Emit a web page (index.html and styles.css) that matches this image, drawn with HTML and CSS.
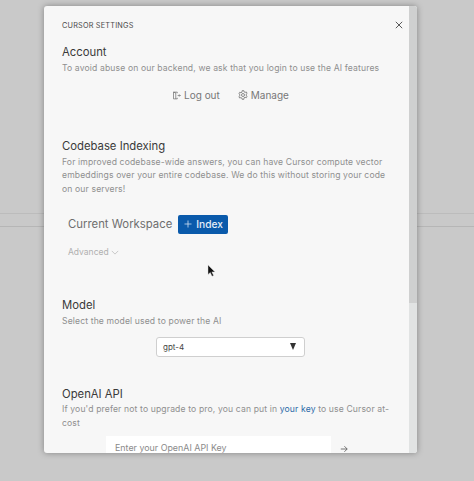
FILE: index.html
```html
<!DOCTYPE html>
<html lang="en">
<head>
<meta charset="utf-8">
<title>Cursor Settings</title>
<link rel="stylesheet" href="styles.css">
</head>
<body>
<div class="backdrop">
  <div class="bar"></div>
</div>
<section class="modal">
  <div class="scroll">
    <header class="modal-head">
      <span class="modal-title">CURSOR SETTINGS</span>
      <svg class="close" viewBox="0 0 10 10" width="8" height="8"><path d="M1 1l8 8M9 1l-8 8"/></svg>
    </header>

    <div class="section account">
      <h2>Account</h2>
      <p>To avoid abuse on our backend, we ask that you login to use the AI features</p>
      <div class="actions">
        <span class="action">
          <svg viewBox="0 0 12 12" width="9" height="9"><path d="M7 3V1.5H2v9h5V9M2 1.5l3 1v8M7.5 6H11M9.5 4.5L11 6 9.5 7.5"/></svg>
          Log out
        </span>
        <span class="action">
          <svg viewBox="0 0 12 12" width="10" height="10"><circle cx="6" cy="6" r="1.8"/><path d="M5 .8h2l.3 1.5 1.2.6 1.4-.6 1 1.8-1.1 1 0 1.4 1.1 1-1 1.8-1.4-.6-1.2.6L7 11.2H5l-.3-1.5-1.2-.6-1.4.6-1-1.8 1.1-1 0-1.4-1.1-1 1-1.8 1.4.6 1.2-.6z"/></svg>
          Manage
        </span>
      </div>
    </div>

    <div class="section indexing">
      <h2>Codebase Indexing</h2>
      <p>For improved codebase-wide answers, you can have Cursor compute vector embeddings over your entire codebase. We do this without storing your code on our servers!</p>
      <div class="workspace">
        <span class="workspace-label">Current Workspace</span>
        <span class="index-btn">
          <svg viewBox="0 0 8 8" width="8" height="8"><path d="M4 .5v7M.5 4h7"/></svg>
          Index
        </span>
      </div>
      <div class="advanced">
        Advanced
        <svg viewBox="0 0 10 6" width="8" height="5"><path d="M1 1l4 4 4-4"/></svg>
      </div>
    </div>

    <div class="section model">
      <h2>Model</h2>
      <p>Select the model used to power the AI</p>
      <div class="select-row">
        <div class="select"><span>gpt-4</span><span class="caret"></span></div>
      </div>
    </div>

    <div class="section openai">
      <h2>OpenAI API</h2>
      <p>If you'd prefer not to upgrade to pro, you can put in <a href="#">your key</a> to use Cursor at-cost</p>
      <div class="key-row">
        <div class="key-input">Enter your OpenAI API Key</div>
        <svg class="arrow" viewBox="0 0 10 10" width="8" height="8"><path d="M1 5h8M5.5 1.5L9 5 5.5 8.5"/></svg>
      </div>
    </div>
  </div>
  <div class="scrollbar"><div class="thumb"></div></div>
  <svg class="cursor" viewBox="0 0 10 16" width="9" height="14"><path d="M1 1v11l2.6-2.3L5.6 14l1.8-.8-2-4.2H9z"/></svg>
</section>
</body>
</html>
```
FILE: styles.css
```css
* { box-sizing: border-box; }
html, body { margin: 0; height: 100%; overflow: hidden; }
body {
  background: #c9c9c9;
  font-family: Inter, "Liberation Sans", sans-serif;
  color: #333;
}
.backdrop { padding-top: 213px; }
.bar {
  height: 14px;
  border-top: 1px solid #bcbcbc;
  border-bottom: 1px solid #b6b6b6;
}
.modal {
  position: absolute;
  left: 44px;
  top: 6px;
  width: 373px;
  height: 447px;
  display: flex;
  background: #f7f7f7;
  border-radius: 3px;
  overflow: hidden;
  box-shadow: 0 0 6px rgba(0, 0, 0, .35);
}
.scroll { flex: 1; padding: 0 17px 0 18px; min-width: 0; overflow: hidden; }
.modal-head {
  display: flex;
  justify-content: space-between;
  align-items: center;
  height: 18px;
  margin: 10px -11px 0 0;
}
.modal-title { font-size: 7.3px; letter-spacing: .2px; color: #4a4a4a; }
.close { fill: none; stroke: #444; stroke-width: 1.1; }
.section h2 { margin: 0 0 1px; font-size: 11.3px; line-height: 18px; font-weight: 400; color: #3a3a3a; }
.section p { margin: 0; font-size: 8.6px; line-height: 13.4px; color: #8f8f8f; letter-spacing: .135px; }
.section a { color: #2a6aa8; text-decoration: none; }
.account { margin-top: 9px; }
.actions {
  display: flex;
  justify-content: center;
  gap: 18px;
  margin-top: 12.6px;
  padding-left: 7px;
  font-size: 10px;
  line-height: 14px;
  color: #777;
}
.action { display: flex; align-items: center; gap: 3px; }
.action svg { fill: none; stroke: #666; stroke-width: .9; }
.indexing { margin-top: 35px; }
.workspace { display: flex; align-items: center; gap: 6px; margin: 18.3px 0 0 6px; }
.workspace-label { font-size: 11.35px; color: #6e6e6e; }
.index-btn {
  display: flex;
  align-items: center;
  gap: 4px;
  width: 50px;
  height: 19px;
  padding-left: 6px;
  background: #0a5aab;
  border-radius: 2px;
  color: #e6eef8;
  font-size: 10.2px;
  font-weight: 500;
}
.index-btn svg { fill: none; stroke: #cfe0f2; stroke-width: .8; }
.advanced {
  display: flex;
  align-items: center;
  gap: 2px;
  margin: 12.5px 0 0 6px;
  font-size: 8.5px;
  line-height: 12px;
  color: #b0b0b0;
}
.advanced svg { fill: none; stroke: #b8b8b8; stroke-width: .9; }
.model { margin-top: 37.5px; }
.select-row { display: flex; justify-content: center; margin: 9px 0 0 7px; }
.select {
  display: flex;
  justify-content: space-between;
  align-items: center;
  width: 149px;
  height: 20px;
  padding: 0 6px;
  background: #fff;
  border: 1px solid #cfcfcf;
  border-radius: 3px;
  font-size: 8px;
  color: #444;
}
.caret {
  width: 0;
  height: 0;
  border-left: 3.5px solid transparent;
  border-right: 3.5px solid transparent;
  border-top: 7px solid #333;
  margin-right: 2px;
}
.openai { margin-top: 28.5px; }
.section.openai h2 { margin-bottom: 0; }
.key-row { display: flex; align-items: center; margin: 5.7px 0 0 44px; gap: 9px; }
.key-input {
  flex: none;
  width: 225px;
  height: 26px;
  padding: 5px 9px;
  background: #fff;
  font-size: 8.9px;
  line-height: 14px;
  color: #8a8a8a;
}
.arrow { flex: none; fill: none; stroke: #555; stroke-width: 1; }
.scrollbar { width: 8px; background: #e1e3e3; }
.thumb { height: 297px; background: #cfd0d0; }
.cursor {
  position: absolute;
  left: 163px;
  top: 258px;
  fill: #111;
  stroke: #ddd;
  stroke-width: .5;
}
```
